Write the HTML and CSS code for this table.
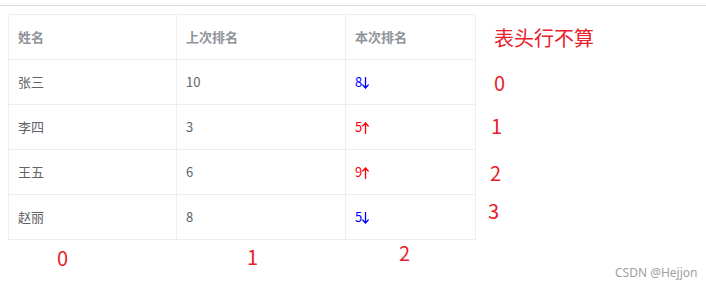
FILE: index.html
```html
<!DOCTYPE html>
<html lang="zh">
<head>
<meta charset="utf-8">
<title>排名表</title>
<link rel="stylesheet" href="styles.css">
</head>
<body>
<div class="stage">
  <div class="topline"></div>
  <table class="rank-table">
    <colgroup>
      <col class="c1"><col class="c2"><col class="c3">
    </colgroup>
    <thead>
      <tr><th>姓名</th><th>上次排名</th><th>本次排名</th></tr>
    </thead>
    <tbody>
      <tr><td>张三</td><td>10</td><td class="down">8<svg class="arrow" viewBox="0 0 7 12" aria-label="↓"><path d="M3.5 0.5V11M0.8 8L3.5 11.2L6.2 8"/></svg></td></tr>
      <tr><td>李四</td><td>3</td><td class="up">5<svg class="arrow" viewBox="0 0 7 12" aria-label="↑"><path d="M3.5 11.5V1M0.8 4L3.5 0.8L6.2 4"/></svg></td></tr>
      <tr><td>王五</td><td>6</td><td class="up">9<svg class="arrow" viewBox="0 0 7 12" aria-label="↑"><path d="M3.5 11.5V1M0.8 4L3.5 0.8L6.2 4"/></svg></td></tr>
      <tr><td>赵丽</td><td>8</td><td class="down">5<svg class="arrow" viewBox="0 0 7 12" aria-label="↓"><path d="M3.5 0.5V11M0.8 8L3.5 11.2L6.2 8"/></svg></td></tr>
    </tbody>
  </table>
  <span class="note note-head">表头行不算</span>
  <span class="note r0">0</span>
  <span class="note r1">1</span>
  <span class="note r2">2</span>
  <span class="note r3">3</span>
  <span class="note c0">0</span>
  <span class="note c1n">1</span>
  <span class="note c2n">2</span>
  <span class="watermark">CSDN @Hejjon</span>
</div>
</body>
</html>
```
FILE: styles.css
```css
html, body {
  margin: 0;
  padding: 0;
  background: #fff;
}
.stage {
  position: relative;
  width: 706px;
  height: 290px;
  overflow: hidden;
  font-family: "Noto Sans CJK SC", "Noto Sans", sans-serif;
}
.topline {
  height: 0;
  margin-top: 5px;
  border-top: 1px solid #dcdcdc;
}
.rank-table {
  margin: 8px 0 0 8px;
  width: 468px;
  table-layout: fixed;
  border-collapse: separate;
  border-spacing: 0;
  border-left: 1px solid #ebeef5;
  border-top: 1px solid #ebeef5;
  font-size: 13px;
}
.rank-table col.c1 { width: 168px; }
.rank-table col.c2 { width: 169px; }
.rank-table col.c3 { width: 130px; }
.rank-table th,
.rank-table td {
  height: 44px;
  padding: 0 0 0 9px;
  text-align: left;
  vertical-align: middle;
  border-right: 1px solid #ebeef5;
  border-bottom: 1px solid #ebeef5;
  line-height: 20px;
  color: #606266;
  font-weight: 400;
}
.rank-table th {
  color: #909399;
  font-weight: 700;
}
.rank-table td.down { color: #0000ff; }
.rank-table td.up { color: #ff0000; }
.arrow {
  width: 7px;
  height: 12px;
  vertical-align: -2px;
  fill: none;
  stroke: currentColor;
  stroke-width: 1.3;
  stroke-linecap: round;
  stroke-linejoin: round;
}

.note {
  position: absolute;
  color: #e8202a;
  font-size: 20px;
  line-height: 20px;
  font-family: "Noto Sans CJK SC", "Noto Sans", sans-serif;
}
.note-head { left: 494px; top: 28px; }
.r0 { left: 494px; top: 73px; }
.r1 { left: 491px; top: 116px; }
.r2 { left: 490px; top: 163px; }
.r3 { left: 488px; top: 201px; }
.c0 { left: 57px; top: 248px; }
.c1n { left: 247px; top: 247px; }
.c2n { left: 399px; top: 243px; }
.watermark {
  position: absolute;
  left: 615px;
  top: 265px;
  font-size: 12px;
  line-height: 16px;
  color: #a0a0a0;
  font-family: "Noto Sans", "Noto Sans CJK SC", sans-serif;
}
```
